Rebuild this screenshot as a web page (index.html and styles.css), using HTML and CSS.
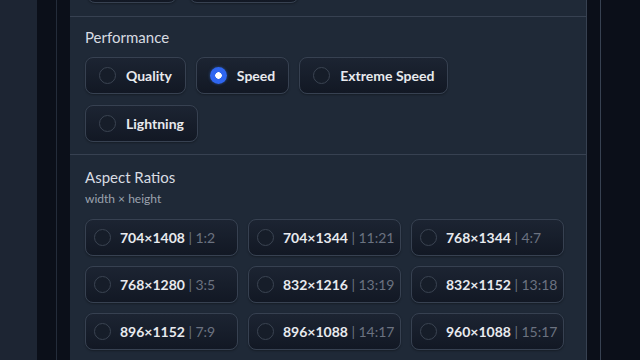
FILE: index.html
```html
<!DOCTYPE html>
<html lang="en">

<head>
    <meta charset="UTF-8" />
    <meta name="viewport" content="width=device-width, initial-scale=1.0" />
    <title>Settings</title>
    <link rel="stylesheet" href="styles.css">
</head>

<body>
    <div class="side"></div>
    <div class="rail"></div>
    <main class="panel">
        <section class="block block-prev">
            <div class="options">
                <label class="option wide-a"><span class="dot"></span><span>&nbsp;</span></label>
                <label class="option wide-b"><span class="dot"></span><span>&nbsp;</span></label>
            </div>
        </section>

        <section class="block">
            <h2>Performance</h2>
            <div class="options">
                <label class="option"><span class="dot"></span><span>Quality</span></label>
                <label class="option checked"><span class="dot"></span><span>Speed</span></label>
                <label class="option"><span class="dot"></span><span>Extreme Speed</span></label>
                <label class="option"><span class="dot"></span><span>Lightning</span></label>
            </div>
        </section>

        <section class="block block-ratios">
            <h2>Aspect Ratios</h2>
            <p class="hint">width × height</p>
            <div class="ratios">
                <label class="option"><span class="dot"></span><span>704×1408 <em>| 1:2</em></span></label>
                <label class="option"><span class="dot"></span><span>704×1344 <em>| 11:21</em></span></label>
                <label class="option"><span class="dot"></span><span>768×1344 <em>| 4:7</em></span></label>
                <label class="option"><span class="dot"></span><span>768×1280 <em>| 3:5</em></span></label>
                <label class="option"><span class="dot"></span><span>832×1216 <em>| 13:19</em></span></label>
                <label class="option"><span class="dot"></span><span>832×1152 <em>| 13:18</em></span></label>
                <label class="option"><span class="dot"></span><span>896×1152 <em>| 7:9</em></span></label>
                <label class="option"><span class="dot"></span><span>896×1088 <em>| 14:17</em></span></label>
                <label class="option"><span class="dot"></span><span>960×1088 <em>| 15:17</em></span></label>
            </div>
        </section>
    </main>
    <div class="rail rail-right"></div>
</body>

</html>
```

FILE: styles.css
```css
* {
    margin: 0;
    padding: 0;
    box-sizing: border-box;
}

body {
    font-family: 'Lato', 'Noto Sans', sans-serif;
    background: #0b0f19;
    color: #e5e7eb;
    display: flex;
    height: 360px;
    overflow: hidden;
}

.side {
    width: 37px;
    flex-shrink: 0;
    background: #1d2533;
}

.rail {
    width: 20px;
    flex-shrink: 0;
    border-right: 1px solid #242c3a;
    margin-right: 13px;
}

.rail-right {
    width: 14px;
    margin-right: 0;
    border-right: 1px solid #374151;
}

.panel {
    width: 517px;
    flex-shrink: 0;
    background: #1f2937;
    border-right: 1px solid #374151;
}

.block {
    padding: 10px 15px 12px 15px;
    border-bottom: 1px solid #374151;
}

.block:last-child {
    border-bottom: none;
}

.block-ratios {
    padding-top: 12px;
}

.block-prev {
    height: 17px;
    padding: 0 15px;
    display: flex;
    align-items: flex-end;
    overflow: hidden;
}

.block-prev .options {
    margin-bottom: 13px;
    gap: 12px;
    padding-left: 2px;
}

.wide-a {
    width: 90px;
}

.wide-b {
    width: 110px;
}

h2 {
    font-size: 15px;
    font-weight: 400;
    color: #d8dce2;
    line-height: 20px;
    margin-bottom: 10px;
}

.hint {
    font-size: 12px;
    line-height: 16px;
    color: #9ca3af;
    margin-top: -6px;
    margin-bottom: 12px;
}

.options {
    display: flex;
    flex-wrap: wrap;
    gap: 11px 10px;
}

.option {
    display: flex;
    align-items: center;
    gap: 10px;
    height: 37px;
    padding: 0 13px;
    border: 1px solid #374151;
    border-radius: 8px;
    background: linear-gradient(180deg, #1c2432, #121824);
    box-shadow: 0 1px 2px rgba(0, 0, 0, 0.3);
    font-size: 14px;
    font-weight: 700;
    color: #e8eaee;
    white-space: nowrap;
}

.dot {
    width: 17px;
    height: 17px;
    border-radius: 50%;
    border: 1px solid #3b4452;
    background: #161d29;
    flex-shrink: 0;
}

.checked .dot {
    border: none;
    background: radial-gradient(circle, #ffffff 0 3px, #2f66f0 3.5px);
    box-shadow: 0 0 3px rgba(59, 130, 246, 0.5);
}

.ratios {
    display: grid;
    grid-template-columns: repeat(3, 153px);
    gap: 10px;
}

.ratios .option {
    padding: 0 8px;
    gap: 9px;
}

.ratios em {
    font-style: normal;
    font-weight: 400;
    color: #6b7280;
}
```
